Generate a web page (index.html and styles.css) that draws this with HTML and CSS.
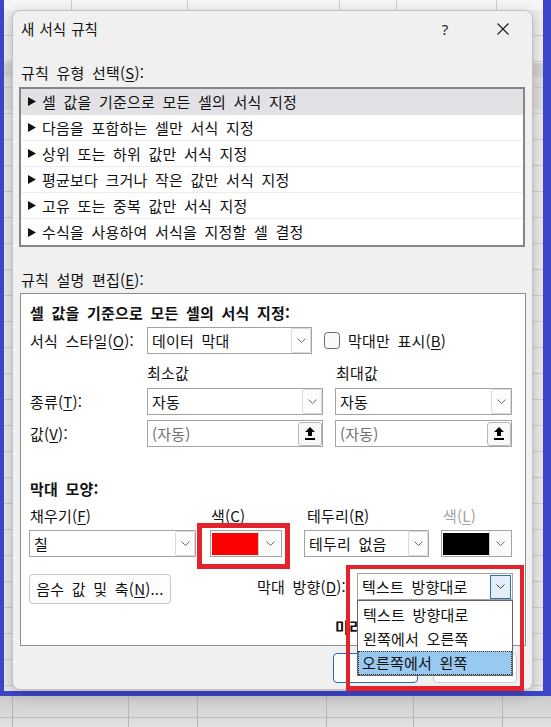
FILE: index.html
```html
<!DOCTYPE html>
<html lang="ko">
<head>
<meta charset="utf-8">
<title>새 서식 규칙</title>
<link rel="stylesheet" href="styles.css">
</head>
<body>
<div class="frame">
  <div class="ribbon">
    <span class="rb rb1"></span><span class="rb rb2"></span><span class="rb rb3"></span><span class="rb rb4"></span><span class="rb rb5"></span><span class="rb rb6"></span>
  </div>
  <div class="grid-area"></div>
</div>
<div class="sheet-bottom">
  <span class="col c1"></span><span class="col c2"></span><span class="col c3"></span><span class="col c4"></span><span class="col c5"></span><span class="col c6"></span><span class="col c7"></span>
</div>

<div class="dialog">
  <div class="titlebar">
    <span class="title">새 서식 규칙</span>
    <span class="help">?</span>
    <span class="close"><svg width="12" height="12" viewBox="0 0 12 12"><path d="M0.5 0.5L11.5 11.5M11.5 0.5L0.5 11.5" stroke="#1a1a1a" stroke-width="1.1" fill="none"/></svg></span>
  </div>

  <div class="lbl lbl-type">규칙 유형 선택(<u>S</u>):</div>
  <div class="listbox">
    <div class="item sel"><svg class="tri" width="8" height="9" viewBox="0 0 8 9"><polygon points="0,0 8,4.5 0,9" fill="#111"/></svg><span>셀 값을 기준으로 모든 셀의 서식 지정</span></div>
    <div class="item"><svg class="tri" width="8" height="9" viewBox="0 0 8 9"><polygon points="0,0 8,4.5 0,9" fill="#111"/></svg><span>다음을 포함하는 셀만 서식 지정</span></div>
    <div class="item"><svg class="tri" width="8" height="9" viewBox="0 0 8 9"><polygon points="0,0 8,4.5 0,9" fill="#111"/></svg><span>상위 또는 하위 값만 서식 지정</span></div>
    <div class="item"><svg class="tri" width="8" height="9" viewBox="0 0 8 9"><polygon points="0,0 8,4.5 0,9" fill="#111"/></svg><span>평균보다 크거나 작은 값만 서식 지정</span></div>
    <div class="item"><svg class="tri" width="8" height="9" viewBox="0 0 8 9"><polygon points="0,0 8,4.5 0,9" fill="#111"/></svg><span>고유 또는 중복 값만 서식 지정</span></div>
    <div class="item last"><svg class="tri" width="8" height="9" viewBox="0 0 8 9"><polygon points="0,0 8,4.5 0,9" fill="#111"/></svg><span>수식을 사용하여 서식을 지정할 셀 결정</span></div>
  </div>

  <div class="lbl lbl-edit">규칙 설명 편집(<u>E</u>):</div>
  <div class="panel">
    <div class="heading">셀 값을 기준으로 모든 셀의 서식 지정:</div>

    <div class="row r-style">
      <span class="rl">서식 스타일(<u>O</u>):</span>
      <div class="combo w165"><span class="val">데이터 막대</span><span class="dd"><svg width="9" height="5" viewBox="0 0 9 5"><polyline points="0.5,0.5 4.5,4.5 8.5,0.5" fill="none" stroke="#6a6a6a" stroke-width="1"/></svg></span></div>
      <span class="check"></span><span class="check-lbl">막대만 표시(<u>B</u>)</span>
    </div>

    <div class="row r-heads">
      <span class="colhead h-min">최소값</span><span class="colhead h-max">최대값</span>
    </div>

    <div class="row r-type">
      <span class="rl">종류(<u>T</u>):</span>
      <div class="combo w176"><span class="val">자동</span><span class="dd"><svg width="9" height="5" viewBox="0 0 9 5"><polyline points="0.5,0.5 4.5,4.5 8.5,0.5" fill="none" stroke="#6a6a6a" stroke-width="1"/></svg></span></div>
      <div class="combo w177 ml12"><span class="val">자동</span><span class="dd"><svg width="9" height="5" viewBox="0 0 9 5"><polyline points="0.5,0.5 4.5,4.5 8.5,0.5" fill="none" stroke="#6a6a6a" stroke-width="1"/></svg></span></div>
    </div>

    <div class="row r-val">
      <span class="rl">값(<u>V</u>):</span>
      <div class="combo w176"><span class="val dis">(자동)</span><span class="pick"><svg width="10" height="13" viewBox="0 0 10 13"><polygon points="5,0 10,5 7,5 7,9 3,9 3,5 0,5" fill="#000"/><rect x="0" y="11" width="10" height="2" fill="#000"/></svg></span></div>
      <div class="combo w177 ml12"><span class="val dis">(자동)</span><span class="pick"><svg width="10" height="13" viewBox="0 0 10 13"><polygon points="5,0 10,5 7,5 7,9 3,9 3,5 0,5" fill="#000"/><rect x="0" y="11" width="10" height="2" fill="#000"/></svg></span></div>
    </div>

    <div class="heading h-bar">막대 모양:</div>

    <div class="row r-barlbl">
      <span class="bl bl1">채우기(<u>F</u>)</span>
      <span class="bl bl2">색(<u>C</u>)</span>
      <span class="bl bl3">테두리(<u>R</u>)</span>
      <span class="bl bl4">색(<u>L</u>)</span>
    </div>

    <div class="row r-bar">
      <div class="combo w167"><span class="val">칠</span><span class="dd"><svg width="9" height="5" viewBox="0 0 9 5"><polyline points="0.5,0.5 4.5,4.5 8.5,0.5" fill="none" stroke="#6a6a6a" stroke-width="1"/></svg></span></div>
      <div class="colorbox w72 ml14"><span class="swatch red"></span><span class="cdd"><svg width="9" height="5" viewBox="0 0 9 5"><polyline points="0.5,0.5 4.5,4.5 8.5,0.5" fill="none" stroke="#6a6a6a" stroke-width="1"/></svg></span></div>
      <div class="combo w125 ml22"><span class="val">테두리 없음</span><span class="dd"><svg width="9" height="5" viewBox="0 0 9 5"><polyline points="0.5,0.5 4.5,4.5 8.5,0.5" fill="none" stroke="#6a6a6a" stroke-width="1"/></svg></span></div>
      <div class="colorbox w71 ml12"><span class="swatch black"></span><span class="cdd"><svg width="9" height="5" viewBox="0 0 9 5"><polyline points="0.5,0.5 4.5,4.5 8.5,0.5" fill="none" stroke="#6a6a6a" stroke-width="1"/></svg></span></div>
    </div>

    <div class="row r-dir">
      <button class="btn btn-neg">음수 값 및 축(<u>N</u>)...</button>
      <span class="dir-lbl">막대 방향(<u>D</u>):</span>
      <div class="combo w156">
        <span class="val">텍스트 방향대로</span>
        <span class="dd dd-focus"><svg width="9" height="5" viewBox="0 0 9 5"><polyline points="0.5,0.5 4.5,4.5 8.5,0.5" fill="none" stroke="#444" stroke-width="1"/></svg></span>
        <div class="droplist">
          <div class="dl-item">텍스트 방향대로</div>
          <div class="dl-item">왼쪽에서 오른쪽</div>
          <div class="dl-item sel">오른쪽에서 왼쪽</div>
        </div>
      </div>
    </div>

    <div class="heading h-preview">미리 보기</div>
  </div>

  <div class="footer">
    <button class="btn ok" aria-label="확인"></button>
    <button class="btn cancel" aria-label="취소"></button>
  </div>
</div>

<div class="mark mark-color"></div>
<div class="mark mark-dir"></div>
</body>
</html>
```

FILE: styles.css
```css
* { box-sizing: border-box; }
html, body { margin: 0; padding: 0; }
body {
  width: 551px;
  height: 727px;
  overflow: hidden;
  position: relative;
  background: #e4e4e4;
  font-family: "Noto Sans CJK KR", "Noto Sans", sans-serif;
  font-size: 15px;
  color: #111;
  letter-spacing: 0.2px;
  word-spacing: 3.1px;
}
u { text-decoration-thickness: 1px; text-underline-offset: 2px; }

/* ---------- background (Excel + blue frame) ---------- */
.frame {
  width: 551px;
  height: 696px;
  border-left: 4px solid #3e46c7;
  border-right: 8px solid #3e46c7;
  border-bottom: 5px solid #3e46c7;
  display: flex;
  flex-direction: column;
}
.ribbon {
  height: 10px;
  flex: none;
  display: flex;
  background: #f5f5f5;
  overflow: hidden;
}
.rb { height: 10px; border-right: 1px solid #cfcfcf; flex: none; }
.rb1 { width: 68px; }
.rb2 { width: 116px; }
.rb3 { width: 152px; }
.rb4 { width: 57px; }
.rb5 { width: 100px; }
.rb6 { flex: 1; border-right: 0; }
.grid-area {
  flex: 1;
  background:
    repeating-linear-gradient(to bottom, transparent 0 25px, #cbcbcb 25px 26px),
    linear-gradient(to bottom, #ececec 0 53px, #d0d0d0 53px 67px, #dcdcdc 67px 100px, #e7e7e7 100px);
}
.sheet-bottom {
  height: 31px;
  display: flex;
  background:
    linear-gradient(to bottom, transparent 0 21px, #bdbdbd 21px 22px, transparent 22px),
    linear-gradient(to bottom, #cacaca, #e2e2e2);
}
.col { height: 31px; flex: none; border-right: 1px solid #b4b4b4; }
.c1 { width: 13px; }
.c2 { width: 116px; }
.c3 { width: 69px; }
.c4 { width: 129px; }
.c5 { width: 87px; }
.c6 { width: 89px; }
.c7 { flex: 1; border-right: 0; }

/* ---------- dialog ---------- */
.dialog {
  position: absolute;
  left: 12px;
  top: 10px;
  width: 521px;
  height: 680px;
  border: 1px solid #c2c2c2;
  border-radius: 8px;
  background: #f0f0f0;
  box-shadow: 0 3px 12px rgba(0, 0, 0, 0.22);
  display: flex;
  flex-direction: column;
}
.titlebar {
  height: 35px;
  flex: none;
  display: flex;
  align-items: center;
}
.title { flex: 1; margin-left: 8px; line-height: 20px; font-size: 14.5px; letter-spacing: 0; word-spacing: 1px; }
.help {
  width: 16px;
  margin-right: 27px;
  text-align: center;
  font-family: "Noto Sans", sans-serif;
  font-size: 15px;
  color: #222;
  line-height: 20px;
}
.close {
  width: 46px;
  margin-right: 6px;
  height: 20px;
  display: flex;
  align-items: center;
  justify-content: center;
}

.lbl { line-height: 20px; margin-left: 8px; flex: none; }
.lbl-type { margin-top: 17px; margin-bottom: 4px; }
.lbl-edit { margin-top: 23px; margin-bottom: 3px; }

.listbox {
  flex: none;
  margin-left: 6px;
  width: 506px;
  height: 160px;
  border: 2px solid #878787;
  background: #fff;
}
.item {
  height: 26px;
  display: flex;
  align-items: center;
  padding-left: 7px;
  border-bottom: 1px solid #ededed;
  line-height: 20px;
  white-space: nowrap;
}
.item.last { border-bottom: 0; }
.item.sel { background: #e2e2e6; border-bottom-color: #e2e2e6; }
.tri { flex: none; margin-right: 6px; }

/* ---------- panel ---------- */
.panel {
  flex: none;
  position: relative;
  margin-left: 7px;
  width: 506px;
  height: 353px;
  border: 1px solid #8e8e8e;
  background: #fff;
  padding: 9px 0 0 8px;
}
.heading { font-weight: 700; line-height: 20px; padding-left: 1px; white-space: nowrap; }
.row { display: flex; align-items: center; }
.rl { width: 118px; flex: none; padding-left: 1px; line-height: 20px; white-space: nowrap; }

.combo {
  position: relative;
  flex: none;
  height: 27px;
  border: 1px solid #a3a3a3;
  background: #fff;
  display: flex;
  align-items: center;
}
.combo .val { flex: 1; padding-left: 4px; line-height: 20px; white-space: nowrap; overflow: hidden; }
.combo .val.dis { color: #717171; }
.dd {
  flex: none;
  width: 20px;
  height: 25px;
  border: 1px solid #dadada;
  border-radius: 2px;
  background: #fdfdfd;
  display: flex;
  align-items: center;
  justify-content: center;
}
.dd-focus {
  width: 21px;
  height: 24px;
  margin-right: 1px;
  border-color: #2f6fab;
  border-radius: 0;
  background: #e3eefa;
}
.pick {
  flex: none;
  width: 24px;
  height: 24px;
  border: 1px solid #b8b8b8;
  border-radius: 3px;
  background: #f8f8f8;
  display: flex;
  align-items: center;
  justify-content: center;
}

.w125 { width: 125px; }
.w156 { width: 156px; }
.w165 { width: 165px; }
.w167 { width: 167px; }
.w176 { width: 176px; }
.w177 { width: 177px; }
.w71 { width: 71px; }
.w72 { width: 72px; }
.ml12 { margin-left: 12px; }
.ml14 { margin-left: 14px; }
.ml22 { margin-left: 22px; }

.check {
  flex: none;
  width: 16px;
  height: 17px;
  margin-left: 12px;
  border: 1px solid #6a6a6a;
  border-radius: 3.5px;
  background: #f9f9f9;
}
.check-lbl { margin-left: 8px; line-height: 20px; white-space: nowrap; }

.r-style { margin-top: 4px; height: 27px; }
.r-heads { margin-top: 9px; height: 20px; }
.colhead { line-height: 20px; flex: none; }
.h-min { margin-left: 118px; width: 188px; }
.h-max { padding-left: 1px; }
.r-type { margin-top: 5px; }
.r-val { margin-top: 5px; }

.h-bar { margin-top: 32px; }
.r-barlbl { margin-top: 7px; height: 20px; }
.bl { line-height: 20px; flex: none; white-space: nowrap; }
.bl1 { width: 181px; padding-left: 1px; }
.bl2 { width: 94px; padding-left: 1px; }
.bl3 { width: 137px; padding-left: 3px; }
.bl4 { padding-left: 2px; color: #a3a3a3; }
.r-bar { margin-top: 4px; }

.colorbox {
  flex: none;
  height: 27px;
  border: 1px solid #a3a3a3;
  background: #fff;
  display: flex;
  padding: 2px 0 1px 1px;
}
.swatch { width: 46px; flex: none; }
.swatch.red { background: #ff0000; }
.swatch.black { background: #000; }
.cdd {
  flex: 1;
  margin-top: -2px;
  margin-bottom: -1px;
  border-left: 1px solid #cfcfcf;
  background: #fafafa;
  display: flex;
  align-items: center;
  justify-content: center;
}

.r-dir { margin-top: 16px; align-items: flex-start; height: 31px; }
.btn {
  font-family: inherit;
  font-size: inherit;
  letter-spacing: inherit;
  word-spacing: inherit;
  color: #111;
  height: 30px;
  padding: 0;
  border: 1px solid #c6c6c6;
  border-radius: 4px;
  background: #fdfdfd;
  line-height: 20px;
  flex: none;
  white-space: nowrap;
}
.btn-neg { width: 142px; margin-top: 1px; }
.dir-lbl { margin-left: 86px; width: 100px; margin-top: 4px; line-height: 20px; flex: none; white-space: nowrap; }

.droplist {
  position: absolute;
  left: -1px;
  top: 26px;
  width: 156px;
  height: 76px;
  border: 1px solid #646464;
  background: #fff;
  padding-top: 2px;
  z-index: 5;
}
.dl-item {
  height: 24px;
  line-height: 22px;
  padding-left: 4px;
  white-space: nowrap;
  border: 1px solid transparent;
}
.dl-item.sel { background: #99c9ef; border: 1px dotted #333; padding-left: 3px; }

/* the preview heading lies behind the open drop-down list, as in the reference */
.h-preview { margin-top: 13px; margin-left: 305px; }

.footer {
  flex: none;
  display: flex;
  justify-content: flex-end;
  gap: 15px;
  margin-top: 7px;
  padding-right: 15px;
}
.ok { width: 85px; border-color: #1f6db5; }
.cancel { width: 84px; border-color: #cdcdcd; }

/* ---------- red annotation marks ---------- */
.mark {
  position: absolute;
  border: 5px solid #e3222c;
  z-index: 10;
}
.mark-color { left: 197px; top: 523px; width: 93px; height: 46px; }
.mark-dir { left: 346px; top: 565px; width: 178px; height: 126px; border-width: 4px 4px 5px 4px; }
```
